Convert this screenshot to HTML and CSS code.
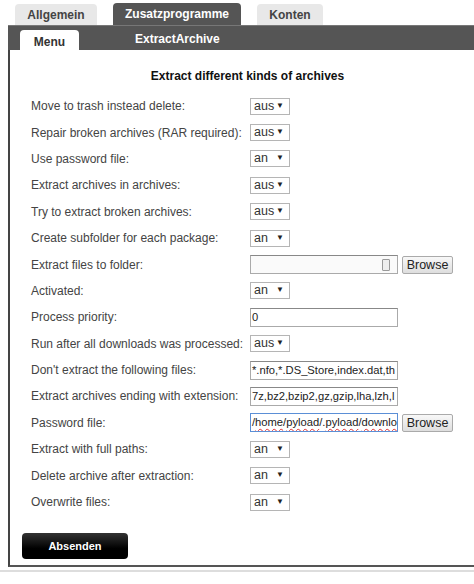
FILE: index.html
```html
<!DOCTYPE html>
<html>
<head>
<meta charset="utf-8">
<link rel="stylesheet" href="styles.css">
</head>
<body>
<div class="tabs">
  <div class="tab">Allgemein</div>
  <div class="tab tab-active">Zusatzprogramme</div>
  <div class="tab tab-konten">Konten</div>
</div>
<div class="subbar">
  <div class="subtab">Menu</div>
  <div class="subtitle">ExtractArchive</div>
</div>
<div class="panel">
  <h1 class="heading">Extract different kinds of archives</h1>
  <div class="form">
    <div class="label">Move to trash instead delete:</div>
    <div class="field"><span class="select">aus<span class="arrow">▼</span></span></div>
    <div class="label">Repair broken archives (RAR required):</div>
    <div class="field"><span class="select">aus<span class="arrow">▼</span></span></div>
    <div class="label">Use password file:</div>
    <div class="field"><span class="select">an<span class="arrow">▼</span></span></div>
    <div class="label">Extract archives in archives:</div>
    <div class="field"><span class="select">aus<span class="arrow">▼</span></span></div>
    <div class="label">Try to extract broken archives:</div>
    <div class="field"><span class="select">aus<span class="arrow">▼</span></span></div>
    <div class="label">Create subfolder for each package:</div>
    <div class="field"><span class="select">an<span class="arrow">▼</span></span></div>
    <div class="label">Extract files to folder:</div>
    <div class="field"><span class="input input-file"><span class="fileicon"></span></span><span class="browse">Browse</span></div>
    <div class="label">Activated:</div>
    <div class="field"><span class="select">an<span class="arrow">▼</span></span></div>
    <div class="label">Process priority:</div>
    <div class="field"><span class="input">0</span></div>
    <div class="label">Run after all downloads was processed:</div>
    <div class="field"><span class="select">aus<span class="arrow">▼</span></span></div>
    <div class="label">Don't extract the following files:</div>
    <div class="field"><span class="input">*.nfo,*.DS_Store,index.dat,th</span></div>
    <div class="label">Extract archives ending with extension:</div>
    <div class="field"><span class="input">7z,bz2,bzip2,gz,gzip,lha,lzh,l</span></div>
    <div class="label">Password file:</div>
    <div class="field"><span class="input input-focus">/<span class="sp">home</span>/<span class="sp">pyload</span>/.<span class="sp">pyload</span>/<span class="sp">downlo</span></span><span class="browse">Browse</span></div>
    <div class="label">Extract with full paths:</div>
    <div class="field"><span class="select">an<span class="arrow">▼</span></span></div>
    <div class="label">Delete archive after extraction:</div>
    <div class="field"><span class="select">an<span class="arrow">▼</span></span></div>
    <div class="label">Overwrite files:</div>
    <div class="field"><span class="select">an<span class="arrow">▼</span></span></div>
  </div>
  <div class="actions"><span class="submit">Absenden</span></div>
</div>
<div class="footline"></div>
</body>
</html>
```
FILE: styles.css
```css
html, body {
  margin: 0;
  padding: 0;
  background: #fff;
  font-family: "Liberation Sans", Arial, sans-serif;
  color: #333;
}
body {
  padding: 3px 0 0 8px;
}
.tabs {
  display: flex;
  align-items: flex-end;
  gap: 16px;
  padding-left: 7px;
  height: 22px;
}
.tab {
  height: 21px;
  width: 82px;
  box-sizing: border-box;
  background: #e8e8e8;
  border-radius: 4px 4px 0 0;
  font-size: 12px;
  font-weight: bold;
  color: #444;
  text-align: center;
  line-height: 22px;
}
.tab-active {
  width: 128px;
  height: 22px;
  background: #555;
  color: #fff;
}
.tab-konten {
  width: 66px;
}
.subbar {
  height: 25px;
  background: #555;
  border-top: 1px solid #777;
  box-sizing: border-box;
  display: flex;
  align-items: flex-end;
  padding-left: 12px;
}
.subtab {
  width: 59px;
  height: 20px;
  background: #fff;
  border-radius: 4px 4px 0 0;
  font-size: 12px;
  font-weight: bold;
  color: #333;
  text-align: center;
  line-height: 24px;
}
.subtitle {
  align-self: flex-start;
  margin-left: 56px;
  margin-top: 6px;
  font-size: 12px;
  font-weight: bold;
  color: #fff;
}
.panel {
  border-left: 2px solid #444;
  border-bottom: 2px solid #555;
  padding: 19px 0 0 21px;
  height: 496px;
}
.heading {
  margin: 0 0 10px 0;
  font-size: 12px;
  font-weight: bold;
  color: #111;
  text-align: center;
  padding-right: 10px;
}
.form {
  display: grid;
  grid-template-columns: 219px 1fr;
  grid-auto-rows: 26.4px;
  align-items: center;
}
.label {
  font-size: 12px;
  color: #444;
  white-space: nowrap;
}
.field {
  display: flex;
  align-items: center;
  gap: 4px;
}
.select {
  box-sizing: border-box;
  width: 40px;
  height: 17px;
  border: 1px solid #b5b5b5;
  background: #fff;
  font-size: 12.5px;
  color: #333;
  line-height: 15px;
  padding-left: 3px;
  display: flex;
  justify-content: space-between;
}
.arrow {
  font-size: 8px;
  padding-right: 5px;
  line-height: 13px;
  color: #222;
}
.input {
  box-sizing: border-box;
  width: 148px;
  height: 19px;
  border: 1px solid #aaa;
  border-top-color: #888;
  background: #fff;
  font-size: 11.2px;
  color: #222;
  line-height: 17px;
  padding-left: 1px;
  white-space: nowrap;
  overflow: hidden;
  position: relative;
}
.input-file {
  background: #fafafa;
}
.fileicon {
  position: absolute;
  right: 7px;
  top: 3px;
  width: 6px;
  height: 10px;
  border: 1px solid #999;
  border-radius: 1px;
  background: #eee;
}
.input-focus {
  border: 1px solid #5b8fd6;
}
.sp {
  text-decoration: underline wavy #e03030;
  text-decoration-thickness: 1px;
  text-underline-offset: 2px;
}
.browse {
  box-sizing: border-box;
  width: 51px;
  height: 18px;
  border: 1px solid #aaa;
  border-radius: 2px;
  background: linear-gradient(#f8f8f8, #dedede);
  font-size: 12.5px;
  color: #222;
  text-align: center;
  line-height: 16px;
}
.actions {
  margin-top: 18px;
  margin-left: -9px;
}
.submit {
  display: inline-block;
  width: 106px;
  height: 26px;
  border-radius: 4px;
  background: linear-gradient(#333, #000 60%);
  color: #fff;
  font-size: 11px;
  font-weight: bold;
  text-align: center;
  line-height: 26px;
}
.footline {
  margin-top: 3px;
  margin-left: -8px;
  height: 2px;
  background: #ddd;
}
```
